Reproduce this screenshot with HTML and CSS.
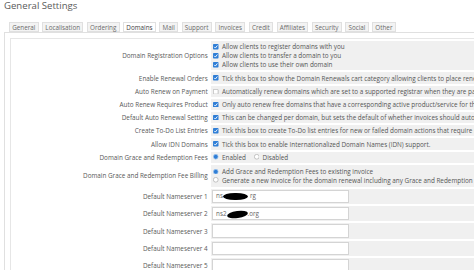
FILE: index.html
```html
<!DOCTYPE html>
<html>
<head>
<meta charset="utf-8">
<link rel="stylesheet" href="styles.css">
</head>
<body>
<h1 class="title">General Settings</h1>
<ul class="tabs">
  <li class="tab">General</li>
  <li class="tab">Localisation</li>
  <li class="tab">Ordering</li>
  <li class="tab active">Domains</li>
  <li class="tab">Mail</li>
  <li class="tab">Support</li>
  <li class="tab">Invoices</li>
  <li class="tab">Credit</li>
  <li class="tab">Affiliates</li>
  <li class="tab">Security</li>
  <li class="tab">Social</li>
  <li class="tab">Other</li>
</ul>
<div class="panel">
  <div class="form">
    <div class="label">Domain Registration Options</div>
    <div class="field multi">
      <div class="line"><svg class="cb" viewBox="0 0 6 6"><rect x="0" y="0" width="6" height="6" rx="0.8" fill="#2f7ed6"/><path d="M1.3 3.1 L2.6 4.4 L4.8 1.6" stroke="#fff" stroke-width="1" fill="none"/></svg>Allow clients to register domains with you</div>
      <div class="line"><svg class="cb" viewBox="0 0 6 6"><rect x="0" y="0" width="6" height="6" rx="0.8" fill="#2f7ed6"/><path d="M1.3 3.1 L2.6 4.4 L4.8 1.6" stroke="#fff" stroke-width="1" fill="none"/></svg>Allow clients to transfer a domain to you</div>
      <div class="line"><svg class="cb" viewBox="0 0 6 6"><rect x="0" y="0" width="6" height="6" rx="0.8" fill="#2f7ed6"/><path d="M1.3 3.1 L2.6 4.4 L4.8 1.6" stroke="#fff" stroke-width="1" fill="none"/></svg>Allow clients to use their own domain</div>
    </div>

    <div class="label">Enable Renewal Orders</div>
    <div class="field"><svg class="cb" viewBox="0 0 6 6"><rect x="0" y="0" width="6" height="6" rx="0.8" fill="#2f7ed6"/><path d="M1.3 3.1 L2.6 4.4 L4.8 1.6" stroke="#fff" stroke-width="1" fill="none"/></svg>Tick this box to show the Domain Renewals cart category allowing clients to place renewal orders</div>

    <div class="label">Auto Renew on Payment</div>
    <div class="field"><svg class="cb" viewBox="0 0 6 6"><rect x="0.4" y="0.4" width="5.2" height="5.2" rx="0.8" fill="#fff" stroke="#9a9a9a" stroke-width="0.6"/></svg>Automatically renew domains which are set to a supported registrar when they are paid for</div>

    <div class="label">Auto Renew Requires Product</div>
    <div class="field"><svg class="cb" viewBox="0 0 6 6"><rect x="0" y="0" width="6" height="6" rx="0.8" fill="#2f7ed6"/><path d="M1.3 3.1 L2.6 4.4 L4.8 1.6" stroke="#fff" stroke-width="1" fill="none"/></svg>Only auto renew free domains that have a corresponding active product/service for them</div>

    <div class="label">Default Auto Renewal Setting</div>
    <div class="field"><svg class="cb" viewBox="0 0 6 6"><rect x="0" y="0" width="6" height="6" rx="0.8" fill="#2f7ed6"/><path d="M1.3 3.1 L2.6 4.4 L4.8 1.6" stroke="#fff" stroke-width="1" fill="none"/></svg>This can be changed per domain, but sets the default of whether invoices should automatically renew</div>

    <div class="label">Create To-Do List Entries</div>
    <div class="field"><svg class="cb" viewBox="0 0 6 6"><rect x="0" y="0" width="6" height="6" rx="0.8" fill="#2f7ed6"/><path d="M1.3 3.1 L2.6 4.4 L4.8 1.6" stroke="#fff" stroke-width="1" fill="none"/></svg>Tick this box to create To-Do list entries for new or failed domain actions that require manual action</div>

    <div class="label">Allow IDN Domains</div>
    <div class="field"><svg class="cb" viewBox="0 0 6 6"><rect x="0" y="0" width="6" height="6" rx="0.8" fill="#2f7ed6"/><path d="M1.3 3.1 L2.6 4.4 L4.8 1.6" stroke="#fff" stroke-width="1" fill="none"/></svg>Tick this box to enable Internationalized Domain Names (IDN) support.</div>

    <div class="label">Domain Grace and Redemption Fees</div>
    <div class="field"><svg class="cb" viewBox="0 0 6 6"><circle cx="3" cy="3" r="2.6" fill="#2f7ed6" stroke="#a9cbee" stroke-width="0.8"/></svg><span class="opt">Enabled</span><svg class="cb" viewBox="0 0 6 6"><circle cx="3" cy="3" r="2.6" fill="#fff" stroke="#9a9a9a" stroke-width="0.6"/></svg>Disabled</div>

    <div class="label">Domain Grace and Redemption Fee Billing</div>
    <div class="field radios">
      <div class="rline"><svg class="cb" viewBox="0 0 6 6"><circle cx="3" cy="3" r="2.6" fill="#2f7ed6" stroke="#a9cbee" stroke-width="0.8"/></svg>Add Grace and Redemption Fees to existing invoice</div>
      <div class="rline"><svg class="cb" viewBox="0 0 6 6"><circle cx="3" cy="3" r="2.6" fill="#fff" stroke="#9a9a9a" stroke-width="0.6"/></svg>Generate a new invoice for the domain renewal including any Grace and Redemption Fees</div>
    </div>

    <div class="label ns">Default Nameserver 1</div>
    <div class="field ns"><div class="input">ns<span class="blot b1"></span>rg</div></div>

    <div class="label ns">Default Nameserver 2</div>
    <div class="field ns"><div class="input">ns2<span class="blot b2"></span>.org</div></div>

    <div class="label ns">Default Nameserver 3</div>
    <div class="field ns"><div class="input"></div></div>

    <div class="label ns">Default Nameserver 4</div>
    <div class="field ns"><div class="input"></div></div>

    <div class="label ns">Default Nameserver 5</div>
    <div class="field ns"><div class="input"></div></div>
  </div>
</div>
</body>
</html>
```
FILE: styles.css
```css
html, body {
  margin: 0;
  padding: 0;
  background: #fff;
}
body {
  width: 474px;
  height: 270px;
  overflow: hidden;
  font-family: "Open Sans", "DejaVu Sans", sans-serif;
  color: #555;
}
.title {
  margin: 0 0 0 4px;
  font-size: 9.6px;
  line-height: 12px;
  font-weight: 400;
  color: #5a5a5a;
}
.tabs {
  list-style: none;
  margin: 9.5px 0 0 9px;
  padding: 0;
  display: flex;
  gap: 3.6px;
  height: 10.5px;
}
.tab {
  box-sizing: border-box;
  height: 10.5px;
  padding: 0 2.2px;
  border: 0.6px solid #e0e0e0;
  background: #f3f3f3;
  font-size: 6.3px;
  line-height: 9.3px;
  color: #6a6a6a;
  white-space: nowrap;
}
.tab.active {
  background: #fff;
  color: #444;
}
.panel {
  margin: 0 0 0 4px;
  width: 620px;
  border: 0.7px solid #e0e0e0;
  padding: 5.3px 5.3px 20px 5.3px;
}
.form {
  border: 0.7px solid #e6e6e6;
  padding: 2px;
  display: grid;
  grid-template-columns: 196px 1fr;
  gap: 2px;
  font-size: 6.35px;
}
.label {
  text-align: right;
  padding: 1.1px 1.6px 1.1px 0;
  line-height: 9px;
  color: #585858;
  white-space: nowrap;
  display: flex;
  align-items: center;
  justify-content: flex-end;
}
.field {
  background: #f0f0f0;
  padding: 1.1px 2px;
  line-height: 9px;
  color: #555;
  white-space: nowrap;
  overflow: hidden;
  display: flex;
  align-items: center;
}
.field.multi,
.field.radios {
  flex-direction: column;
  align-items: flex-start;
}
.field.radios {
  padding-top: 2.5px;
  padding-bottom: 2.5px;
}
.line {
  display: flex;
  align-items: center;
  height: 9px;
}
.rline {
  display: flex;
  align-items: center;
  height: 8.5px;
}
.cb {
  width: 5.5px;
  height: 5.5px;
  margin-right: 3.2px;
  flex: none;
}
.opt {
  margin-right: 8px;
}
.field.ns {
  padding-top: 0.9px;
  padding-bottom: 0.9px;
  padding-left: 0.8px;
}
.label.ns {
  padding-top: 0.9px;
  padding-bottom: 0.9px;
}
.input {
  box-sizing: border-box;
  width: 136.5px;
  height: 13.5px;
  background: #fff;
  border: 0.7px solid #d4d4d4;
  padding-left: 3px;
  font-size: 6.3px;
  line-height: 12px;
  color: #666;
  display: flex;
  align-items: center;
}
.blot {
  display: inline-block;
  background: #000;
  border-radius: 50%;
}
.b1 {
  width: 25px;
  height: 7.5px;
  margin: 0 1.5px 0 0.5px;
}
.b2 {
  width: 21px;
  height: 7px;
  margin: 2px 0 0 0;
  transform: rotate(-8deg);
}
```
